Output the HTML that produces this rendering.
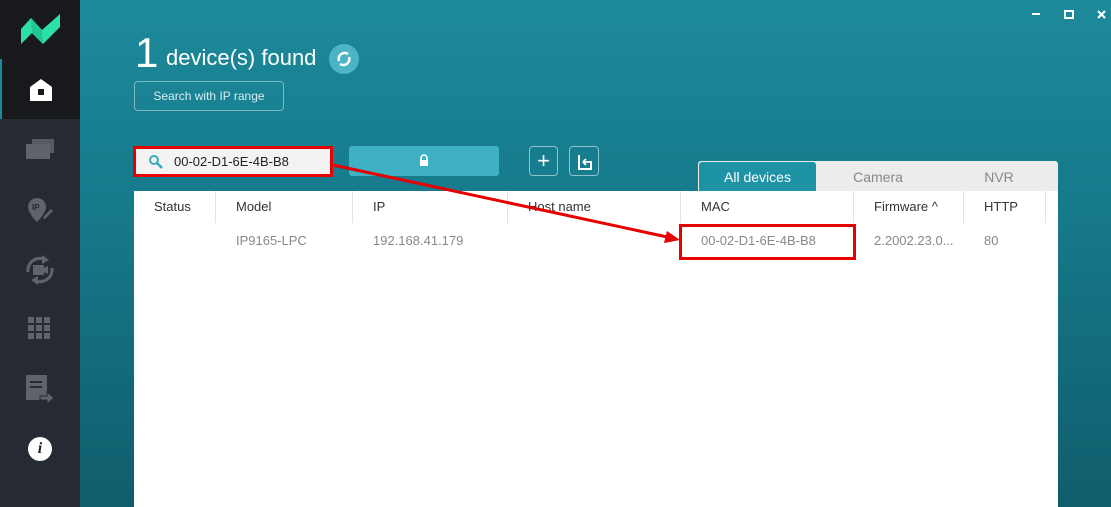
<!DOCTYPE html>
<html><head><style>
*{margin:0;padding:0;box-sizing:border-box}
body{width:1111px;height:507px;overflow:hidden;font-family:"Liberation Sans","DejaVu Sans",sans-serif;position:relative;background:linear-gradient(180deg,#1d8a9b 0%,#167a8b 40%,#105d6c 100%)}
.sb{position:absolute;left:0;top:0;width:80px;height:507px;background:#262a33}
.logo{position:absolute;left:0;top:0;width:80px;height:59px;background:#17191d}
.act{position:absolute;left:0;top:59px;width:80px;height:60px;background:#17191d;border-left:2px solid #1d8a9b}
.abs{position:absolute}
.wc{position:absolute;top:0;color:#fff}
</style></head><body>
<div class="sb">
 <div class="logo"><svg class="abs" style="left:0;top:0" width="80" height="59" viewBox="0 0 80 59"><path d="M21 29 L31 18 L42 30 L60 14 L60 27 L43 44 L32 33 L21 44Z" fill="#2de0a8"/><path d="M31 18 L42 30 L43 44 L32 33Z" fill="#22c596"/></svg></div>
 <div class="act"><svg class="abs" style="left:26px;top:18px" width="26" height="26" viewBox="0 0 26 26"><path d="M2 10 L13 2 L24 10 L24 24 L2 24Z" fill="#fff"/><rect x="10" y="12" width="6" height="6" fill="#17191d"/></svg></div>
 <svg class="abs" style="left:25px;top:137px" width="32" height="24" viewBox="0 0 32 24"><rect x="7" y="2" width="22" height="14" fill="#555a63"/><rect x="1" y="7" width="24" height="15" fill="#5f646c"/></svg>
 <svg class="abs" style="left:26px;top:196px" width="28" height="28" viewBox="0 0 28 28"><path d="M11 2a9 9 0 0 1 9 9c0 6-9 15-9 15s-9-9-9-15a9 9 0 0 1 9-9z" fill="#5f646c"/><text x="6" y="14" font-size="8" font-weight="bold" fill="#262a33" font-family="Liberation Sans">IP</text><path d="M18 20 L25 13 L27 15 L20 22 L17 23Z" fill="#5f646c"/></svg>
 <svg class="abs" style="left:22px;top:252px" width="36" height="36" viewBox="0 0 36 36"><path d="M6 20a12 12 0 0 1 18-12" stroke="#5f646c" stroke-width="3" fill="none"/><path d="M30 16a12 12 0 0 1-18 12" stroke="#5f646c" stroke-width="3" fill="none"/><path d="M20 3 L27 8 L20 12Z" fill="#5f646c"/><path d="M16 24 L9 28 L16 33Z" fill="#5f646c"/><rect x="11" y="13" width="11" height="10" fill="#5f646c"/><path d="M22 16 L26 14 L26 22 L22 20Z" fill="#5f646c"/></svg>
 <svg class="abs" style="left:28px;top:317px" width="24" height="24" viewBox="0 0 24 24"><g fill="#5f646c"><rect x="0" y="0" width="6" height="6"/><rect x="8" y="0" width="6" height="6"/><rect x="16" y="0" width="6" height="6"/><rect x="0" y="8" width="6" height="6"/><rect x="8" y="8" width="6" height="6"/><rect x="16" y="8" width="6" height="6"/><rect x="0" y="16" width="6" height="6"/><rect x="8" y="16" width="6" height="6"/><rect x="16" y="16" width="6" height="6"/></g></svg>
 <svg class="abs" style="left:25px;top:374px" width="30" height="32" viewBox="0 0 30 32"><rect x="1" y="1" width="21" height="25" fill="#5f646c"/><rect x="5" y="7" width="12" height="2" fill="#262a33"/><rect x="5" y="12" width="12" height="2" fill="#262a33"/><path d="M15 22 L22 22 L22 18 L29 24 L22 30 L22 26 L15 26Z" fill="#5f646c" stroke="#262a33" stroke-width="1"/></svg>
 <div class="abs" style="left:28px;top:437px;width:24px;height:24px;border-radius:50%;background:#fff;color:#222;font:italic bold 16px 'Liberation Serif',serif;text-align:center;line-height:24px">i</div>
</div>
<svg class="wc" style="left:1032px;top:10px" width="80" height="10"><rect x="0" y="3" width="8" height="2" fill="#fff"/><rect x="33" y="1" width="8" height="7" fill="none" stroke="#fff" stroke-width="2"/><path d="M66 1 L73 8 M73 1 L66 8" stroke="#fff" stroke-width="2"/></svg>
<div class="abs" style="left:135px;top:28px;color:#fff;font-size:42px;font-weight:300;line-height:50px">1</div>
<div class="abs" style="left:166px;top:44px;color:#fff;font-size:22px;line-height:28px">device(s) found</div>
<div class="abs" style="left:329px;top:44px;width:30px;height:30px;border-radius:50%;background:#4db4c6"><svg width="30" height="30" viewBox="0 0 30 30"><path d="M10 17a6 6 0 0 1 9-7M20 13a6 6 0 0 1-9 7" stroke="#fff" stroke-width="2.5" fill="none"/></svg></div>
<div class="abs" style="left:134px;top:81px;width:150px;height:30px;border:1px solid #7bb8c3;border-radius:4px;color:#d6eef2;font-size:12px;text-align:center;line-height:28px">Search with IP range</div>
<div class="abs" style="left:133px;top:146px;width:200px;height:31px;border:3px solid #e60000;background:#f3f3f3"></div>
<svg class="abs" style="left:148px;top:154px" width="16" height="16" viewBox="0 0 16 16"><circle cx="6" cy="6" r="4" stroke="#3aa9bb" stroke-width="2" fill="none"/><path d="M9 9 L14 14" stroke="#3aa9bb" stroke-width="2.5"/></svg>
<div class="abs" style="left:174px;top:153px;font-size:13px;color:#222;line-height:17px">00-02-D1-6E-4B-B8</div>
<div class="abs" style="left:349px;top:146px;width:150px;height:30px;border-radius:3px;background:#3eb2c4"><svg class="abs" style="left:70px;top:8px" width="10" height="12"><path d="M2 6V4a3 3 0 0 1 6 0v2" stroke="#fff" stroke-width="1.6" fill="none"/><rect x="1" y="6" width="8" height="6" fill="#fff"/></svg></div>
<div class="abs" style="left:529px;top:146px;width:29px;height:30px;border:1px solid #8ec3cc;border-radius:4px;color:#fff;font-size:22px;text-align:center;line-height:27px">+</div>
<div class="abs" style="left:569px;top:146px;width:30px;height:30px;border:1px solid #8ec3cc;border-radius:4px"><svg class="abs" style="left:7px;top:7px" width="16" height="16"><path d="M2 1V15H14V7" stroke="#fff" stroke-width="2" fill="none"/><path d="M6 8H14M6 8L9 5M6 8L9 11" stroke="#fff" stroke-width="1.8" fill="none"/></svg></div>
<div class="abs" style="left:134px;top:191px;width:924px;height:316px;background:#fff"></div>
<div class="abs" style="left:698px;top:161px;width:360px;height:30px;background:#ececec;border-radius:3px 3px 0 0"></div>
<div class="abs" style="left:699px;top:162px;width:117px;height:29px;background:#1f93a6;color:#fff;font-size:14px;text-align:center;line-height:30px;border-radius:3px 3px 0 0">All devices</div>
<div class="abs" style="left:818px;top:162px;width:120px;line-height:30px;text-align:center;color:#888;font-size:14px">Camera</div>
<div class="abs" style="left:940px;top:162px;width:118px;line-height:30px;text-align:center;color:#888;font-size:14px">NVR</div>
<div style="position:absolute;left:134px;top:191px;width:924px;height:32px;font-size:13px;color:#333">
 <span class="abs" style="left:20px;top:8px">Status</span>
 <span class="abs" style="left:102px;top:8px">Model</span>
 <span class="abs" style="left:239px;top:8px">IP</span>
 <span class="abs" style="left:394px;top:8px">Host name</span>
 <span class="abs" style="left:567px;top:8px">MAC</span>
 <span class="abs" style="left:740px;top:8px">Firmware ^</span>
 <span class="abs" style="left:850px;top:8px">HTTP</span>
 <div class="abs" style="left:81px;top:0;width:1px;height:32px;background:#e4e4e4"></div>
 <div class="abs" style="left:218px;top:0;width:1px;height:32px;background:#e4e4e4"></div>
 <div class="abs" style="left:373px;top:0;width:1px;height:32px;background:#e4e4e4"></div>
 <div class="abs" style="left:546px;top:0;width:1px;height:32px;background:#e4e4e4"></div>
 <div class="abs" style="left:719px;top:0;width:1px;height:32px;background:#e4e4e4"></div>
 <div class="abs" style="left:829px;top:0;width:1px;height:32px;background:#e4e4e4"></div>
 <div class="abs" style="left:911px;top:0;width:1px;height:32px;background:#e4e4e4"></div>
</div>
<div style="position:absolute;left:134px;top:233px;font-size:13px;color:#888">
 <span class="abs" style="left:102px;white-space:nowrap">IP9165-LPC</span>
 <span class="abs" style="left:239px;white-space:nowrap">192.168.41.179</span>
 <span class="abs" style="left:567px;white-space:nowrap">00-02-D1-6E-4B-B8</span>
 <span class="abs" style="left:740px;white-space:nowrap">2.2002.23.0...</span>
 <span class="abs" style="left:850px;white-space:nowrap">80</span>
</div>
<div class="abs" style="left:679px;top:224px;width:177px;height:36px;border:3px solid #e60000"></div>
<svg class="abs" style="left:0;top:0" width="1111" height="507"><line x1="333" y1="165" x2="672" y2="238" stroke="#e60000" stroke-width="3"/><path d="M680 240 L664 243 L667 231Z" fill="#e60000"/></svg>
</body></html>
